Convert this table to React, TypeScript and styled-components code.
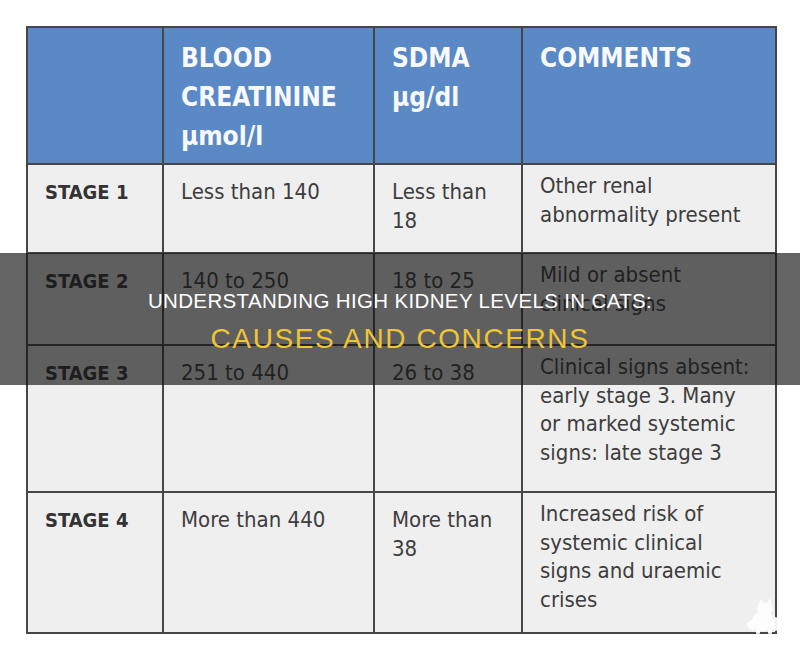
import React from 'react'
import styled, { createGlobalStyle } from 'styled-components'

const GlobalStyle = createGlobalStyle`
  body {
    margin: 0;
    background: #ffffff;
  }
`

const Page = styled.div`
  position: relative;
  width: 800px;
  height: 653px;
  padding: 26px 0 0 26px;
  box-sizing: border-box;
  overflow: hidden;
  font-family: "DejaVu Sans Condensed", "DejaVu Sans", sans-serif;
  font-stretch: condensed;
`

const Table = styled.div`
  display: grid;
  grid-template-columns: 134px 209px 146px 252px;
  grid-template-rows: 135px 87px 90px 145px 139px;
  gap: 2px;
  padding: 2px;
  width: max-content;
  background: #464646;
`

const HeadCell = styled.div`
  background: #5a89c6;
  padding: 11px 17px 0;
  color: #f7f9fc;
  font-weight: bold;
  font-size: 26px;
  line-height: 39px;
`

const Cell = styled.div<{ $bold?: boolean; $tight?: boolean }>`
  background: #efefef;
  padding: ${p => (p.$tight ? '7px' : '13px')} 17px 0;
  color: ${p => (p.$bold ? '#333333' : '#3d3d3d')};
  font-weight: ${p => (p.$bold ? 'bold' : 'normal')};
  font-size: ${p => (p.$bold ? '20px' : '22px')};
  line-height: 28.5px;
`

const Band = styled.div`
  position: absolute;
  top: 253px;
  left: 0;
  right: 0;
  height: 132px;
  box-sizing: border-box;
  padding-top: 36px;
  display: flex;
  flex-direction: column;
  align-items: center;
  gap: 10px;
  background: rgba(20, 20, 20, 0.66);
  font-family: "Liberation Sans", Arial, sans-serif;
`

const Title = styled.div`
  color: #ffffff;
  font-size: 20.5px;
  line-height: 24px;
  letter-spacing: 0.35px;
  white-space: nowrap;
`

const Subtitle = styled.div`
  color: #efc632;
  font-size: 28px;
  line-height: 32px;
  letter-spacing: 1.6px;
  white-space: nowrap;
`

const Mark = styled.svg`
  position: absolute;
  left: 744px;
  top: 597px;
  width: 40px;
  height: 38px;
  opacity: 0.92;
`

type Row = {
  stage: string
  creatinine: string[]
  sdma: string[]
  comments: string[]
}

const rows: Row[] = [
  {
    stage: 'STAGE 1',
    creatinine: ['Less than 140'],
    sdma: ['Less than', '18'],
    comments: ['Other renal', 'abnormality present'],
  },
  {
    stage: 'STAGE 2',
    creatinine: ['140 to 250'],
    sdma: ['18 to 25'],
    comments: ['Mild or absent', 'clinical signs'],
  },
  {
    stage: 'STAGE 3',
    creatinine: ['251 to 440'],
    sdma: ['26 to 38'],
    comments: [
      'Clinical signs absent:',
      'early stage 3. Many',
      'or marked systemic',
      'signs: late stage 3',
    ],
  },
  {
    stage: 'STAGE 4',
    creatinine: ['More than 440'],
    sdma: ['More than', '38'],
    comments: [
      'Increased risk of',
      'systemic clinical',
      'signs and uraemic',
      'crises',
    ],
  },
]

const Lines = ({ lines }: { lines: string[] }) => (
  <>
    {lines.map((line, i) => (
      <React.Fragment key={i}>
        {i > 0 && <br />}
        {line}
      </React.Fragment>
    ))}
  </>
)

const App: React.FC = () => {
  return (
    <Page>
      <GlobalStyle />
      <Table>
        <HeadCell />
        <HeadCell>
          <Lines lines={['BLOOD', 'CREATININE', 'μmol/l']} />
        </HeadCell>
        <HeadCell>
          <Lines lines={['SDMA', 'μg/dl']} />
        </HeadCell>
        <HeadCell>COMMENTS</HeadCell>
        {rows.map(row => (
          <React.Fragment key={row.stage}>
            <Cell $bold>{row.stage}</Cell>
            <Cell>
              <Lines lines={row.creatinine} />
            </Cell>
            <Cell>
              <Lines lines={row.sdma} />
            </Cell>
            <Cell $tight>
              <Lines lines={row.comments} />
            </Cell>
          </React.Fragment>
        ))}
      </Table>
      <Band>
        <Title>UNDERSTANDING HIGH KIDNEY LEVELS IN CATS:</Title>
        <Subtitle>CAUSES AND CONCERNS</Subtitle>
      </Band>
      <Mark viewBox="0 0 40 38">
        <g fill="#ffffff">
          <path d="M14 8 L17 2 L20 8 Z" />
          <path d="M22 7 L26 1 L28 9 Z" />
          <ellipse cx="21" cy="12" rx="8" ry="6.5" />
          <ellipse cx="19" cy="24" rx="11" ry="10" />
          <ellipse cx="9" cy="28" rx="6" ry="5" />
          <ellipse cx="31" cy="27" rx="5" ry="7" />
          <rect x="12" y="32" width="4" height="5" rx="1.5" />
          <rect x="24" y="32" width="4" height="5" rx="1.5" />
        </g>
      </Mark>
    </Page>
  )
}

export default App
